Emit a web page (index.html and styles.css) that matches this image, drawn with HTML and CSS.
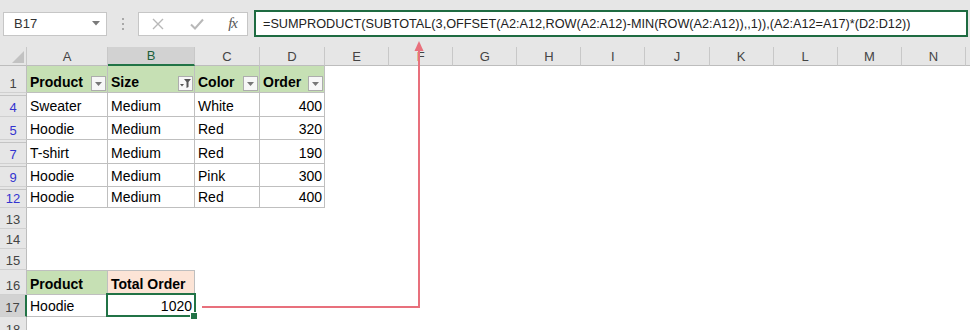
FILE: index.html
```html
<!DOCTYPE html>
<html lang="en">
<head>
  <meta charset="UTF-8">
  <title>SUMPRODUCT SUBTOTAL</title>
  <link rel="stylesheet" href="styles.css">
</head>
<body>
  <div class="app">
    <!-- barra de fórmulas -->
    <div class="formula-bar">
      <div class="name-box">
        <span>B17</span>
        <svg width="8" height="5" viewBox="0 0 8 5"><path d="M0 0H8L4 4.5Z" fill="#7a7a7a"/></svg>
      </div>
      <div class="grip"><i></i><i></i><i></i></div>
      <div class="fx-buttons">
        <svg width="14" height="14" viewBox="0 0 14 14"><path d="M2 2L12 12M12 2L2 12" stroke="#b8b8b8" stroke-width="1.4"/></svg>
        <svg width="16" height="14" viewBox="0 0 16 14"><path d="M2 7.5L6 11.5L14 2.5" stroke="#b8b8b8" stroke-width="2" fill="none"/></svg>
        <span class="fx">fx</span>
      </div>
      <div class="formula">=SUMPRODUCT(SUBTOTAL(3,OFFSET(A2:A12,ROW(A2:A12)-MIN(ROW(A2:A12)),,1)),(A2:A12=A17)*(D2:D12))</div>
    </div>

    <!-- planilha -->
    <div class="sheet">
      <div class="ch corner"><svg width="12" height="12" viewBox="0 0 12 12"><path d="M12 0V12H0Z" fill="#c2c2c2"/></svg></div>
      <div class="ch">A</div>
      <div class="ch sel">B</div>
      <div class="ch">C</div>
      <div class="ch">D</div>
      <div class="ch">E</div>
      <div class="ch">F</div>
      <div class="ch">G</div>
      <div class="ch">H</div>
      <div class="ch">I</div>
      <div class="ch">J</div>
      <div class="ch">K</div>
      <div class="ch">L</div>
      <div class="ch">M</div>
      <div class="ch">N</div>
      <div class="ch end"></div>

      <div class="rh">1</div>
      <div class="c th green">Product<span class="flt"><svg width="7" height="4" viewBox="0 0 7 4"><path d="M0 0H7L3.5 4Z" fill="#777"/></svg></span></div>
      <div class="c th green">Size<span class="flt"><svg width="11" height="9" viewBox="0 0 11 9"><path d="M4 0H11L8.5 3V8L6.5 9V3Z" fill="#555"/><path d="M0 5H4L2 7.5Z" fill="#555"/></svg></span></div>
      <div class="c th green">Color<span class="flt"><svg width="7" height="4" viewBox="0 0 7 4"><path d="M0 0H7L3.5 4Z" fill="#777"/></svg></span></div>
      <div class="c th green">Order<span class="flt"><svg width="7" height="4" viewBox="0 0 7 4"><path d="M0 0H7L3.5 4Z" fill="#777"/></svg></span></div>

      <div class="rh blue hidden-above">4</div>
      <div class="c">Sweater</div>
      <div class="c">Medium</div>
      <div class="c">White</div>
      <div class="c num">400</div>

      <div class="rh blue">5</div>
      <div class="c">Hoodie</div>
      <div class="c">Medium</div>
      <div class="c">Red</div>
      <div class="c num">320</div>

      <div class="rh blue hidden-above">7</div>
      <div class="c">T-shirt</div>
      <div class="c">Medium</div>
      <div class="c">Red</div>
      <div class="c num">190</div>

      <div class="rh blue hidden-above">9</div>
      <div class="c">Hoodie</div>
      <div class="c">Medium</div>
      <div class="c">Pink</div>
      <div class="c num">300</div>

      <div class="rh blue hidden-above">12</div>
      <div class="c">Hoodie</div>
      <div class="c">Medium</div>
      <div class="c">Red</div>
      <div class="c num">400</div>

      <div class="rh">13</div>
      <div class="rh">14</div>
      <div class="rh">15</div>

      <div class="rh">16</div>
      <div class="c th green top">Product</div>
      <div class="c th peach top">Total Order</div>

      <div class="rh sel">17</div>
      <div class="c">Hoodie</div>
      <div class="c num active">1020</div>

      <div class="rh">18</div>
    </div>

    <!-- seta de referência -->
    <svg class="arrow" width="970" height="330" viewBox="0 0 970 330">
      <path d="M202 307H419V50" stroke="#e8707c" stroke-width="2" fill="none"/>
      <path d="M419 41L414.5 51H423.5Z" fill="#e8707c"/>
    </svg>
  </div>
</body>
</html>
```

FILE: styles.css
```css
/* Excel: barra de fórmulas + planilha filtrada */
body {
  margin: 0;
  font-family: "Liberation Sans", Arial, sans-serif;
  background-color: #fff;
}
.app {
  position: relative;
  width: 970px;
  height: 330px;
  overflow: hidden;
}
.formula-bar {
  height: 47px;
  background-color: #e6e6e6;
  display: flex;
  align-items: center;
  padding-left: 3px;
  box-sizing: border-box;
}
.name-box {
  width: 104px;
  height: 24px;
  box-sizing: border-box;
  background-color: #fff;
  border: 1px solid #c6c6c6;
  display: flex;
  align-items: center;
  justify-content: space-between;
  padding: 0 6px 0 10px;
  font-size: 13px;
  color: #333;
}
.grip {
  width: 31px;
  display: flex;
  flex-direction: column;
  align-items: center;
  gap: 3px;
}
.grip i {
  width: 2px;
  height: 2px;
  background-color: #a8a8a8;
}
.fx-buttons {
  width: 110px;
  height: 24px;
  box-sizing: border-box;
  background-color: #fff;
  border: 1px solid #c6c6c6;
  display: flex;
  align-items: center;
  justify-content: space-between;
  padding: 0 10px 0 12px;
}
.fx {
  font-family: "Liberation Serif", serif;
  font-style: italic;
  font-size: 15px;
  color: #555;
  letter-spacing: -1px;
}
.formula {
  margin-left: 6px;
  width: 714px;
  height: 27px;
  box-sizing: border-box;
  background-color: #fff;
  border: 2px solid #1e6b41;
  display: flex;
  align-items: center;
  padding-left: 7px;
  font-size: 12.7px;
  color: #222;
  white-space: nowrap;
}
.sheet {
  display: grid;
  grid-template-columns: 27px 81px 87px 65px 65px repeat(10, 64.1px) 1fr;
  grid-template-rows: 19px 27px 24px 23px 24px 23px 21px 21px 20px 21px 25px 22px 22px;
}
.ch {
  background-color: #e6e6e6;
  border-right: 1px solid #c8c8c8;
  border-bottom: 1px solid #bdbdbd;
  font-size: 13px;
  color: #444;
  display: flex;
  align-items: center;
  justify-content: center;
  box-sizing: border-box;
}
.ch.corner {
  align-items: flex-end;
  justify-content: flex-end;
  padding: 0 2px 2px 0;
}
.ch.sel {
  background-color: #d2d2d2;
  border-bottom: 2px solid #217346;
  color: #1e5f3a;
}
.ch.end {
  border-right: none;
}
.rh {
  grid-column: 1;
  background-color: #e6e6e6;
  border-right: 1px solid #bdbdbd;
  border-bottom: 1px solid #d0d0d0;
  font-size: 13px;
  color: #444;
  display: flex;
  align-items: flex-end;
  justify-content: center;
  padding-bottom: 1px;
  box-sizing: border-box;
}
.rh.blue {
  color: #3434d0;
}
.rh.hidden-above {
  box-shadow: inset 0 2px 0 #e6e6e6, inset 0 3px 0 #c4c4c4;
}
.rh.sel {
  background-color: #d2d2d2;
  border-right: 2px solid #217346;
}
.c {
  border-right: 1px solid #bfbfbf;
  border-bottom: 1px solid #bfbfbf;
  font-size: 14px;
  color: #000;
  display: flex;
  align-items: flex-end;
  justify-content: space-between;
  padding: 0 2px 2px 3px;
  box-sizing: border-box;
  white-space: nowrap;
}
.c.num {
  justify-content: flex-end;
}
.c.th {
  font-weight: bold;
}
.c.top {
  border-top: 1px solid #bfbfbf;
}
.green {
  background-color: #c6e0b4;
}
.peach {
  background-color: #fce4d6;
}
.flt {
  width: 15px;
  height: 15px;
  box-sizing: border-box;
  margin: 0 -1px -1px 0;
  border: 1px solid #adadad;
  background-color: #f7f7f7;
  display: flex;
  align-items: center;
  justify-content: center;
}
.c.active {
  position: relative;
}
.c.active::after {
  content: "";
  position: absolute;
  left: -2px;
  top: -2px;
  right: -2px;
  bottom: -1px;
  border: 2px solid #217346;
}
.c.active::before {
  content: "";
  position: absolute;
  right: -4px;
  bottom: -4px;
  width: 6px;
  height: 6px;
  background-color: #217346;
  border: 1px solid #fff;
  z-index: 1;
}
.arrow {
  position: absolute;
  left: 0;
  top: 0;
  pointer-events: none;
}
```
